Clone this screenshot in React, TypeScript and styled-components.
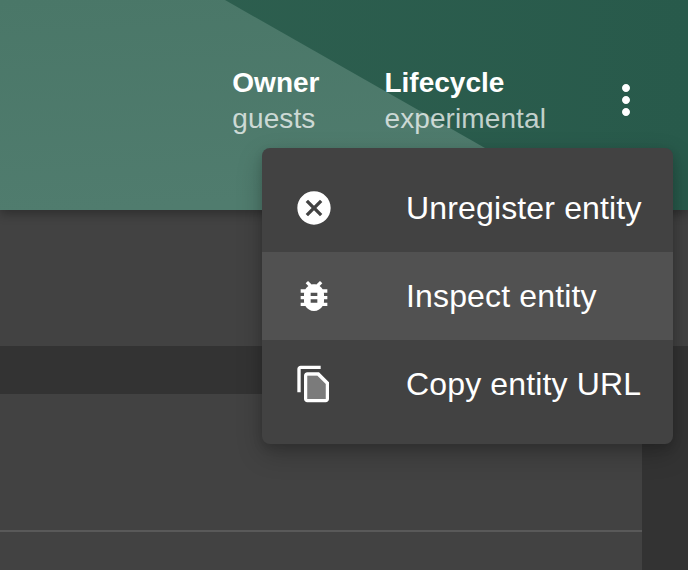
import React from "react";
import styled, { createGlobalStyle } from "styled-components";

const Global = createGlobalStyle`
  html, body { margin: 0; padding: 0; height: 100%; background: #424242; overflow: hidden; }
  #root { height: 570px; }
`;

const Page = styled.div`
  position: relative;
  width: 688px;
  height: 570px;
  overflow: hidden;
  display: flex;
  flex-direction: column;
  background: #424242;
  font-family: "Liberation Sans", Arial, sans-serif;
`;

const Header = styled.header`
  position: relative;
  flex: 0 0 210px;
  display: flex;
  justify-content: flex-end;
  align-items: flex-start;
  padding: 65px 38px 0 0;
  box-sizing: border-box;
  overflow: hidden;
  background: linear-gradient(90deg, #2f6050 0%, #285a4b 100%);
  box-shadow: 0 4px 10px rgba(0, 0, 0, 0.3);
  z-index: 1;
`;

const Wave = styled.svg`
  position: absolute;
  inset: 0;
  width: 688px;
  height: 210px;
`;

const Stat = styled.div<{ $gap: number }>`
  position: relative;
  margin-right: ${(p) => p.$gap}px;
  color: #fff;
`;

const StatLabel = styled.div`
  font-size: 28px;
  font-weight: 700;
  line-height: 36px;
`;

const StatValue = styled.div`
  font-size: 28px;
  line-height: 36px;
  letter-spacing: 0.1px;
  color: rgba(255, 255, 255, 0.72);
`;

const KebabButton = styled.div`
  position: relative;
  color: #fff;
  display: flex;
  margin-top: 11px;
`;

const Top = styled.section`
  flex: 0 0 136px;
  background: #424242;
`;

const TabBar = styled.nav`
  flex: 0 0 48px;
  background: #333333;
`;

const Body = styled.main`
  flex: 1;
  display: flex;
  background: #333333;
`;

const Card = styled.div`
  width: 642px;
  background: #424242;
  padding-top: 136px;
  box-sizing: border-box;
`;

const Divider = styled.hr`
  margin: 0;
  border: 0;
  height: 2px;
  background: #595959;
`;

const Menu = styled.ul`
  position: absolute;
  left: 262px;
  top: 148px;
  width: 411px;
  height: 296px;
  margin: 0;
  padding: 16px 0;
  box-sizing: border-box;
  list-style: none;
  background: #424242;
  border-radius: 8px;
  box-shadow: 0 10px 26px rgba(0, 0, 0, 0.22), 0 4px 10px rgba(0, 0, 0, 0.14);
  z-index: 2;
`;

const Item = styled.li<{ $active?: boolean }>`
  height: 88px;
  display: flex;
  align-items: center;
  padding-left: 32px;
  background: ${(p) => (p.$active ? "#515151" : "transparent")};
  color: #fff;
`;

const ItemIcon = styled.svg`
  flex: 0 0 40px;
  width: 40px;
  height: 40px;
  fill: #fff;
`;

const ItemText = styled.span`
  margin-left: 72px;
  font-size: 32px;
  line-height: 44px;
  letter-spacing: 0.15px;
  white-space: nowrap;
`;

export default function App() {
  return (
    <Page>
      <Global />
      <Header>
        <Wave viewBox="0 0 688 210" aria-hidden="true">
          <defs>
            <linearGradient id="w" x1="0" y1="0" x2="0.15" y2="1">
              <stop offset="0" stopColor="#4a7768" />
              <stop offset="1" stopColor="#507c6e" />
            </linearGradient>
          </defs>
          <polygon points="0,0 225,0 594,210 0,210" fill="url(#w)" />
        </Wave>
        <Stat $gap={65}>
          <StatLabel>Owner</StatLabel>
          <StatValue>guests</StatValue>
        </Stat>
        <Stat $gap={56}>
          <StatLabel>Lifecycle</StatLabel>
          <StatValue>experimental</StatValue>
        </Stat>
        <KebabButton>
          <svg width="48" height="48" viewBox="0 0 24 24" fill="currentColor">
            <path d="M12 8c1.1 0 2-.9 2-2s-.9-2-2-2-2 .9-2 2 .9 2 2 2zm0 2c-1.1 0-2 .9-2 2s.9 2 2 2 2-.9 2-2-.9-2-2-2zm0 6c-1.1 0-2 .9-2 2s.9 2 2 2 2-.9 2-2-.9-2-2-2z" />
          </svg>
        </KebabButton>
      </Header>
      <Top />
      <TabBar />
      <Body>
        <Card>
          <Divider />
        </Card>
      </Body>
      <Menu>
        <Item>
          <ItemIcon viewBox="0 0 24 24">
            <path d="M12 2C6.47 2 2 6.47 2 12s4.47 10 10 10 10-4.47 10-10S17.53 2 12 2zm5 13.59L15.59 17 12 13.41 8.41 17 7 15.59 10.59 12 7 8.41 8.41 7 12 10.59 15.59 7 17 8.41 13.41 12 17 15.59z" />
          </ItemIcon>
          <ItemText>Unregister entity</ItemText>
        </Item>
        <Item $active>
          <ItemIcon viewBox="0 0 24 24">
            <path d="M20 8h-2.81c-.45-.78-1.07-1.45-1.82-1.96L17 4.41 15.59 3l-2.17 2.17C12.96 5.06 12.49 5 12 5c-.49 0-.96.06-1.41.17L8.41 3 7 4.41l1.62 1.63C7.88 6.55 7.26 7.22 6.81 8H4v2h2.09c-.05.33-.09.66-.09 1v1H4v2h2v1c0 .34.04.67.09 1H4v2h2.81c1.04 1.79 2.97 3 5.19 3s4.15-1.21 5.19-3H20v-2h-2.09c.05-.33.09-.66.09-1v-1h2v-2h-2v-1c0-.34-.04-.67-.09-1H20V8zm-6 8h-4v-2h4v2zm0-4h-4v-2h4v2z" />
          </ItemIcon>
          <ItemText>Inspect entity</ItemText>
        </Item>
        <Item>
          <ItemIcon viewBox="0 0 24 24">
            <path d="M8 7h6l5 5v9H8z" opacity=".3" />
            <path fillRule="evenodd" d="M16 1H4c-1.1 0-2 .9-2 2v14h2V3h12V1zM15 5H8c-1.1 0-1.99.9-1.99 2L6 21c0 1.1.89 2 1.99 2H19c1.1 0 2-.9 2-2V11l-6-6zM8 21V7h6l5 5v9H8z" />
          </ItemIcon>
          <ItemText>Copy entity URL</ItemText>
        </Item>
      </Menu>
    </Page>
  );
}
